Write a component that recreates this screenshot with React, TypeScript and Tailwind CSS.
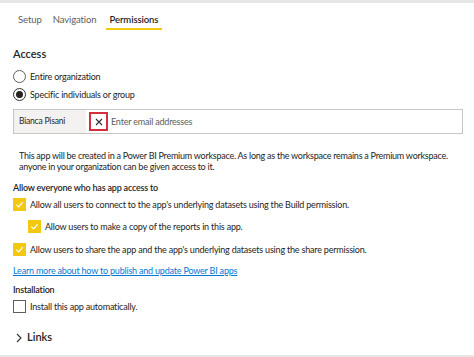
import React from "react";

const Check = () => (
  <span className="w-[13px] h-[13px] bg-[#f2c811] flex items-center justify-center shrink-0">
    <svg width="9" height="9" viewBox="0 0 10 10"><path d="M1.5 5.2 L4 7.6 L8.6 2.4" fill="none" stroke="#fff" strokeWidth="1.3" /></svg>
  </span>
);

export default function App() {
  return (
    <div className="w-[474px] h-[357px] bg-white text-[#252423] text-[9px] tracking-[-0.2px] overflow-hidden relative" style={{ fontFamily: "Lato, sans-serif" }}>
      <div className="h-[3px] bg-[#e6e6e6]" />
      <div className="flex items-end pl-[18px] h-[27px] text-[9.5px] tracking-[-0.1px] text-[#605e5c]">
        <span className="pb-[4px] leading-[13px]">Setup</span>
        <span className="ml-[11px] pb-[4px] leading-[13px]">Navigation</span>
        <span className="ml-[9px] pb-[2px] px-[4px] leading-[13px] border-b-2 border-[#f2c811] text-[#252423] font-semibold">Permissions</span>
      </div>
      <div className="px-[13px]">
        <div className="mt-[17px] text-[11px] font-semibold leading-[14px] tracking-normal">Access</div>
        <div className="mt-[9px] flex items-center gap-[4px] h-[13px]">
          <span className="w-[13px] h-[13px] rounded-full border border-[#605e5c]" />
          <span>Entire organization</span>
        </div>
        <div className="mt-[5px] flex items-center gap-[4px] h-[13px]">
          <span className="w-[13px] h-[13px] rounded-full border border-[#323130] flex items-center justify-center"><span className="w-[7px] h-[7px] rounded-full bg-[#252423]" /></span>
          <span>Specific individuals or group</span>
        </div>
        <div className="mt-[8px] h-[25px] w-[450px] border border-[#c8c6c4] flex items-center">
          <div className="h-[23px] bg-[#f3f2f1] w-[72px] flex items-center pl-[5px] text-[8.5px]">Bianca Pisani</div>
          <div className="ml-[3px] w-[19px] h-[19px] border-2 border-[#d32f3c] flex items-center justify-center">
            <svg width="8" height="8" viewBox="0 0 8 8"><path d="M1 1 L7 7 M7 1 L1 7" stroke="#323130" strokeWidth="1.1" /></svg>
          </div>
          <span className="ml-[3px] text-[#605e5c]">Enter email addresses</span>
        </div>
        <div className="mt-[16px] pl-[6px] leading-[11px] whitespace-nowrap tracking-[-0.25px]">
          This app will be created in a Power BI Premium workspace. As long as the workspace remains a Premium workspace.<br />
          anyone in your organization can be given access to it.
        </div>
        <div className="mt-[9px] font-semibold leading-[13px]">Allow everyone who has app access to</div>
        <div className="mt-[4px] flex items-center gap-[4px] h-[13px]"><Check /><span>Allow all users to connect to the app's underlying datasets using the Build permission.</span></div>
        <div className="mt-[9px] ml-[15px] flex items-center gap-[4px] h-[13px]"><Check /><span>Allow users to make a copy of the reports in this app.</span></div>
        <div className="mt-[10px] flex items-center gap-[4px] h-[13px]"><Check /><span>Allow users to share the app and the app's underlying datasets using the share permission.</span></div>
        <div className="mt-[8px] text-[#0078d4] underline leading-[13px]">Learn more about how to publish and update Power BI apps</div>
        <div className="mt-[6px] font-semibold leading-[13px]">Installation</div>
        <div className="mt-[4px] flex items-center gap-[4px] h-[13px]">
          <span className="w-[13px] h-[13px] border border-[#605e5c]" />
          <span>Install this app automatically.</span>
        </div>
        <div className="mt-[18px] flex items-center gap-[5px] pl-[3px] h-[13px]">
          <svg width="6" height="10" viewBox="0 0 6 10"><path d="M1 1 L5 5 L1 9" fill="none" stroke="#323130" strokeWidth="1.1" /></svg>
          <span className="text-[11px] font-semibold tracking-normal">Links</span>
        </div>
      </div>
      <div className="absolute bottom-0 left-0 right-0 h-[2px] bg-[#e6e6e6]" />
    </div>
  );
}
